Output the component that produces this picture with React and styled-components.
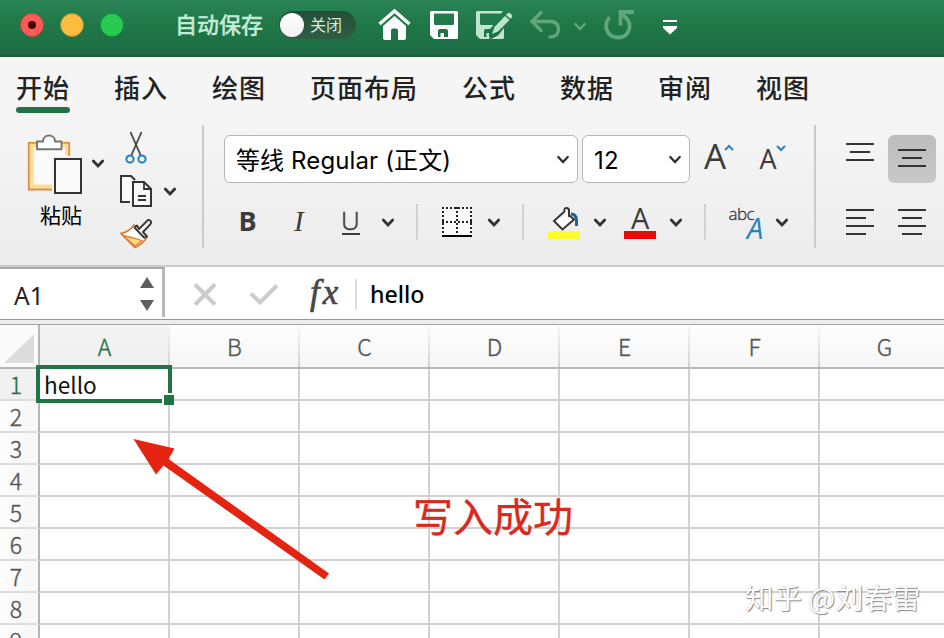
import React from "react";
import styled, { createGlobalStyle } from "styled-components";

const cjk = `"Noto Sans CJK SC", sans-serif`;

const GlobalStyle = createGlobalStyle`
  body {
    margin: 0;
    overflow: hidden;
  }
  * {
    box-sizing: border-box;
  }
  svg {
    display: block;
    flex: none;
    overflow: visible;
  }
`;

const Window = styled.div`
  width: 944px;
  height: 638px;
  position: relative;
  overflow: hidden;
  display: flex;
  flex-direction: column;
  background: #fff;
  font-family: "Open Sans", ${cjk};
  color: #222;
`;

/* title bar */

const TitleBar = styled.div`
  height: 57px;
  flex: none;
  display: flex;
  padding: 0 0 5px 20px;
  align-items: center;
  background: linear-gradient(#2a8455, #1f7647 50%, #1d6e43);
  border-bottom: 2px solid #205c3d;
`;

const Lights = styled.div`
  display: flex;
  gap: 16px;
  width: 155px;
`;

const Light = styled.div`
  width: 24px;
  height: 24px;
  border-radius: 50%;
  background: ${(p) => p.$color};
  border: 1px solid ${(p) => p.$edge};
  display: flex;
  align-items: center;
  justify-content: center;

  i {
    width: 8px;
    height: 8px;
    border-radius: 50%;
    background: #4d0000;
  }
`;

const AutoSave = styled.div`
  width: 104px;
  padding-bottom: 4px;
  font: 500 22px/30px ${cjk};
  -webkit-text-stroke: 0.3px #c4ead5;
  color: #c4ead5;
`;

const Toggle = styled.div`
  width: 77px;
  height: 28px;
  border-radius: 14px;
  padding: 0 0 1px 1px;
  margin-right: 22px;
  display: flex;
  align-items: center;
  gap: 6px;
  background: linear-gradient(#234e37, #2f5e46);
  color: #d5eadd;
  font: 400 16px/22px ${cjk};

  i {
    width: 24px;
    height: 24px;
    border-radius: 50%;
    background: linear-gradient(#fff, #f1f1f1);
  }

  span {
    padding-bottom: 2px;
  }
`;

const QuickIcon = styled.div`
  width: ${(p) => p.$width}px;
  padding-top: ${(p) => p.$drop || 0}px;
  display: flex;
  align-items: center;
`;

/* ribbon */

const Tabs = styled.div`
  height: 68px;
  flex: none;
  display: flex;
  gap: 44px;
  padding: 10px 16px 0;
  background: #f5f5f5;
`;

const Tab = styled.div`
  height: 46px;
  font: 500 26px/40px ${cjk};
  letter-spacing: 1px;
  white-space: nowrap;
  color: #222;
  display: flex;
  flex-direction: column;

  &::after {
    content: "";
    height: 6px;
    flex: none;
    border-radius: 3px;
    background: ${(p) => (p.$active ? "#217346" : "transparent")};
  }
`;

const Ribbon = styled.div`
  height: 140px;
  flex: none;
  display: flex;
  align-items: flex-start;
  padding-left: 27px;
  background: linear-gradient(#f5f5f5, #ececec);
`;

const Paste = styled.div`
  width: 65px;
  padding-top: 8px;

  span {
    display: block;
    margin: 4px 0 0 13px;
    font: 400 21px/30px ${cjk};
    color: #000;
  }
`;

const Split = styled.div`
  padding-top: ${(p) => p.$top}px;
  width: ${(p) => p.$width}px;
`;

const ClipTools = styled.div`
  width: 45px;
  padding-top: 6px;
  display: flex;
  flex-direction: column;
  gap: 10px;
`;

const GroupLine = styled.div`
  width: 2px;
  height: 123px;
  background: #cbcbcb;
`;

const FontGroup = styled.div`
  width: 610px;
  padding: 10px 0 0 20px;
`;

const FontRow = styled.div`
  display: flex;
  height: 48px;
`;

const Select = styled.div`
  width: ${(p) => p.$width}px;
  height: 48px;
  margin-right: ${(p) => p.$after}px;
  display: flex;
  align-items: center;
  justify-content: space-between;
  padding: 0 8px 0 11px;
  background: #fff;
  border: 1px solid #b6b6b6;
  border-radius: 6px;
  font: 400 24px/34px Inter, ${cjk};
  letter-spacing: 0.12px;
  color: #000;
  white-space: nowrap;

  span {
    padding-top: 3px;
  }
`;

const FormatRow = styled.div`
  display: flex;
  align-items: center;
  height: 38px;
  margin-top: 20px;
`;

const Slot = styled.div`
  width: ${(p) => p.$width}px;
  display: flex;
  align-items: center;
  flex: none;
`;

const ThinLine = styled.div`
  width: 2px;
  height: 36px;
  background: #d2d2d2;
`;

const AlignGroup = styled.div`
  display: grid;
  grid-template-columns: 48px 48px;
  grid-template-rows: 48px 48px;
  gap: 15px 4px;
  padding: 10px 0 0 20px;
`;

const AlignButton = styled.div`
  display: flex;
  flex-direction: column;
  align-items: ${(p) => (p.$left ? "flex-start" : "center")};
  gap: 6px;
  padding: ${(p) => p.$top}px 10px 0;
  border-radius: 6px;
  background: ${(p) => (p.$active ? "linear-gradient(#bdbdbd, #c8c8c8)" : "none")};
`;

const Bar = styled.div`
  width: ${(p) => (p.$short ? 20 : 28)}px;
  height: 2px;
  background: #333;
`;

/* formula bar */

const FormulaBar = styled.div`
  height: 60px;
  flex: none;
  display: flex;
  background: #fff;
  border-top: 2px solid #cbcbcb;
  border-bottom: 2px solid #a3a3a3;
`;

const FormulaInner = styled.div`
  flex: 1;
  display: flex;
  align-items: center;
  height: 57px;
  padding-top: 2px;
  border-bottom: 4px solid #ededed;
  box-shadow: inset 0 -1px #989898;
`;

const NameBox = styled.div`
  width: 165px;
  height: 50px;
  margin-top: -2px;
  align-self: flex-start;
  display: flex;
  align-items: center;
  justify-content: space-between;
  padding: 4px 8px 0 14px;
  border-top: 2px solid #aaa;
  border-right: 3px solid #b8b8b8;
  font: 400 24.5px/34px "Noto Sans", sans-serif;

  span {
    padding-top: 2px;
  }
`;

const Fx = styled.div`
  width: 45px;
  padding-bottom: 4px;
  font: italic 400 35px/40px "Liberation Serif", serif;
  letter-spacing: 3px;
  color: #484848;
  -webkit-text-stroke: 0.7px #484848;
`;

const FormulaText = styled.div`
  border-left: 2px solid #dedede;
  height: 31px;
  padding-left: 13px;
  font: 500 23.2px/31px "Noto Sans", sans-serif;
  color: #000;
`;

/* sheet */

const Sheet = styled.div`
  display: grid;
  grid-template-columns: 40px repeat(7, 130px);
  grid-template-rows: 44px repeat(9, 32px);
  flex: none;
`;

const Corner = styled.div`
  border-right: 2px solid #b5b5b5;
  border-bottom: 2px solid #b5b5b5;
  background: #fafafa;
  padding: 9px 0 0 4px;
`;

const ColHead = styled.div`
  display: flex;
  justify-content: center;
  padding: 4px 1px 0 0;
  border-bottom: 2px solid #b8b8b8;
  background: linear-gradient(#f8f8f8, #d2d2d2) right / 2px 100% no-repeat,
    ${(p) => (p.$active ? "linear-gradient(#f3f3f3, #f0f0f0)" : "linear-gradient(#fefefe, #f6f6f6)")};
  font: 300 23px/35px ${cjk};
  -webkit-text-stroke: 0.4px;
  color: ${(p) => (p.$active ? "#217346" : "#555")};
`;

const RowHead = styled.div`
  padding: 0 14px 0 8px;
  text-align: center;
  border-right: 2px solid #b5b5b5;
  border-bottom: 2px solid #ddd;
  background: ${(p) => (p.$active ? "#f1f1f1" : "linear-gradient(90deg, #fdfdfd, #f7f7f7)")};
  font: 300 23px/31px ${cjk};
  -webkit-text-stroke: 0.4px;
  color: ${(p) => (p.$active ? "#217346" : "#555")};
`;

const Cell = styled.div`
  border-right: 2px solid #d0d0d0;
  border-bottom: 2px solid #d0d0d0;
  padding-left: 4px;
  font: 400 22.6px/32px ${cjk};
  color: #111;
`;

/* things lying over the sheet */

const Selection = styled.div`
  position: absolute;
  left: 36px;
  top: 365px;
  width: 136px;
  height: 38px;
  border: 4px solid #217346;

  &::after {
    content: "";
    position: absolute;
    right: -6px;
    bottom: -6px;
    width: 12px;
    height: 12px;
    box-sizing: border-box;
    background: #217346;
    border: solid #fff;
    border-width: 2px 0 0 2px;
  }
`;

const Arrow = styled.svg`
  position: absolute;
  left: 130px;
  top: 435px;
`;

const Note = styled.div`
  position: absolute;
  left: 413px;
  top: 487px;
  font: 400 40px/56px ${cjk};
  -webkit-text-stroke: 0.4px;
  color: #d9291c;
`;

const Watermark = styled.div`
  position: absolute;
  left: 745px;
  top: 577px;
  font: 400 28.4px/40px ${cjk};
  color: #fff;
  text-shadow: 1px 1px 1px #888, 0 0 1px #aaa;
  white-space: nowrap;
`;

const Chevron = ({ color = "#333", width = 2.8 }) => (
  <svg width="12" height="9" viewBox="0 0 12 9" fill="none" stroke={color} strokeWidth={width}>
    <path d="M1.300 2 6 7 10.700 2" strokeLinecap="round" />
  </svg>
);

const HomeIcon = () => (
  <svg width="33" height="32" viewBox="0 0 33 32" fill="#fff">
    <path d="M1.500 15 16.500 2 31.500 15" fill="none" stroke="#fff" strokeWidth="3.400" />
    <path d="M5 17 16.500 7 28 17V29Q28 31 26 31H20V21.500Q20 19.500 18 19.500H15Q13 19.500 13 21.500V31H7Q5 31 5 29Z" />
  </svg>
);

const SaveIcon = () => (
  <svg width="28" height="28" viewBox="0 0 28 28" fill="#fff">
    <path
      fillRule="evenodd"
      d="M1.500 0H26.500Q28 0 28 1.500V26.500Q28 28 26.500 28H4L0 24V1.500Q0 0 1.500 0ZM4 2.500V12.500Q4 14 5.500 14H22.500Q24 14 24 12.500V2.500ZM8 26V20Q8 18 10 18H16Q18 18 18 20V26Z"
    />
    <path d="M10.500 22H14V27H10.500Z" />
  </svg>
);

const SaveAsIcon = () => (
  <svg width="37" height="28" viewBox="0 0 37 28" fill="#c0e4d0">
    <path
      fillRule="evenodd"
      d="M1.500 0H27L25 2.500H4V12.500Q4 14 5.500 14H17.500L14 18H10Q8 18 8 20V26H14L13 28H4L0 24V1.500Q0 0 1.500 0ZM28 17V26.500Q28 28 26.500 28H15L22 24.500Z"
    />
    <path d="M10.500 22H13V27H10.500Z" />
    <path d="M16 23 18.500 16 29 5 33.500 9 22 20.500Z" />
    <path d="m30 4 2-2Q33 1 35 3T36 6L34.500 8Z" />
  </svg>
);

const UndoIcon = () => (
  <svg width="31" height="28" viewBox="530 11 31 28" fill="none" stroke="#62a680" strokeWidth="3.400" strokeLinecap="round">
    <path d="M541 12.500 532 21.500 541 30.500M533 21.500H551Q558.500 22 558.500 29.500Q558 37 550 37" />
  </svg>
);

const RedoIcon = () => (
  <svg width="31" height="31" viewBox="604 11 31 31" fill="none" stroke="#62a680" strokeWidth="3.800">
    <path d="M608.500 19.500C604 26 606 38.500 618 38.500C630 38.500 632.500 25 626 19L621 14" strokeLinecap="round" />
    <path d="M620.500 26.500V13H634" />
  </svg>
);

const PasteIcon = () => (
  <svg width="56" height="62" viewBox="27 134 56 62">
    <path d="M29.500 144.500H69V190H29.500Z" fill="#fbfbfb" />
    <path d="M31.700 189V146.500H67V156" fill="none" stroke="#ffdc94" strokeWidth="4" />
    <path d="M30 187.500H52" stroke="#ffdc94" strokeWidth="4" />
    <path d="M69.200 157V143.800H28.800V190.500H52" fill="none" stroke="#e28d3d" strokeWidth="1.800" />
    <path d="M52 157H71V191.500H52Z" fill="#f2f2f2" />
    <path d="M37 150.200V142.500H43C43 134.500 55 134.500 55 142.500H61.500V150.200Z" fill="#fff" stroke="#757575" strokeWidth="1.900" />
    <path d="M55 160H81V194H55Z" fill="#fafafa" stroke="#353535" strokeWidth="2" />
  </svg>
);

const CutIcon = () => (
  <svg width="34" height="34" viewBox="119 131 34 34" fill="none">
    <path d="M130.500 132 140.500 155M141.500 132 131.500 155" stroke="#444" strokeWidth="1.800" />
    <circle cx="130" cy="159" r="3.600" stroke="#1b83bb" strokeWidth="2" />
    <circle cx="142" cy="159" r="3.600" stroke="#1b83bb" strokeWidth="2" />
  </svg>
);

const CopyIcon = () => (
  <svg width="34" height="34" viewBox="119 175 34 34" fill="#fafafa" stroke="#353535" strokeWidth="2">
    <path d="M130 202H121V176H131L135 180" />
    <path d="M133 182H144L151 189V206H133Z" />
    <path d="M144 182V189H151M138 196H146M138 200H146" fill="none" strokeWidth="1.800" />
  </svg>
);

const BrushIcon = () => (
  <svg width="34" height="32" viewBox="119 219 34 32" strokeLinejoin="round">
    <path d="M134 225 147 237Q143 244 135 247.500L121 233.500Q129 232 134 225Z" fill="#fff" stroke="#df7f34" strokeWidth="1.800" />
    <path d="M123 235.500Q134 238 142 240.500L135 246Z" fill="#ffda80" stroke="#df7f34" strokeWidth="1.300" />
    <path d="m139 229 7.500-7.500Q148 219 150 220.500T150.500 224L143 232 147 236.500 144 237.500 134.500 227.500 137 225.500Z" fill="#fff" stroke="#383838" strokeWidth="1.900" />
  </svg>
);

const GrowFont = () => (
  <svg width="55" height="48" viewBox="704 135 55 48">
    <text x="704" y="168.500" fontSize="35" fill="#3b3b3b">A</text>
    <path d="m725 150 4-4 4 4" fill="none" stroke="#2585bd" strokeWidth="2" />
  </svg>
);

const ShrinkFont = () => (
  <svg width="30" height="48" viewBox="759 135 30 48">
    <text x="759.500" y="168.500" fontSize="27" fill="#3b3b3b">A</text>
    <path d="m777 146 4 4 4-4" fill="none" stroke="#2585bd" strokeWidth="2" />
  </svg>
);

const BoldIcon = () => (
  <svg width="20" height="38" viewBox="239 203 20 38">
    <text x="238.500" y="231" fontSize="27" fontWeight="700" fill="#3b3b3b">B</text>
  </svg>
);

const ItalicIcon = () => (
  <svg width="20" height="38" viewBox="290 203 20 38">
    <text x="294" y="231" fontSize="29" fontStyle="italic" fontFamily="Liberation Serif" fill="#3b3b3b">I</text>
  </svg>
);

const UnderlineIcon = () => (
  <svg width="20" height="38" viewBox="341 203 20 38">
    <text x="341" y="229.500" fontSize="26" fontWeight="300" fill="#3b3b3b" stroke="#3b3b3b" strokeWidth=".5">U</text>
    <path d="M342 234H360" stroke="#3b3b3b" strokeWidth="2" />
  </svg>
);

const BorderIcon = () => (
  <svg width="30" height="38" viewBox="442 203 30 38">
    <path d="M442 207H472V235H442Z" fill="#fafafa" />
    <path
      d="M442 208H472M442 222H472M443 207V234M457 207V234M471 207V234"
      stroke="#222"
      strokeWidth="2"
      strokeDasharray="2 2"
    />
    <path d="M442 236H472" stroke="#000" strokeWidth="2" />
  </svg>
);

const FillIcon = () => (
  <svg width="34" height="38" viewBox="547 203 34 38">
    <path d="M548 231H580V239H548Z" fill="#fdfd2e" />
    <path d="M565 211 554 221 562.500 229.500 574 219.500 569 215V211Q569 208 566.500 208T564.500 211" fill="#fff" stroke="#353535" strokeWidth="2" />
    <path d="M569 209V217" stroke="#353535" strokeWidth="1.800" />
    <path d="M571 214Q576 214 576.500 220V226" fill="none" stroke="#1d639d" strokeWidth="3" />
  </svg>
);

const FontColorIcon = () => (
  <svg width="32" height="38" viewBox="624 203 32 38">
    <text x="631" y="228.500" fontSize="29" fill="#3b3b3b">A</text>
    <path d="M624 231H656V239H624Z" fill="#e80b05" />
  </svg>
);

const PhoneticIcon = () => (
  <svg width="38" height="38" viewBox="729 203 38 38">
    <text x="728.500" y="219.500" fontSize="17" fontWeight="300" fill="#333" stroke="#333" strokeWidth=".3" textLength="26">abc</text>
    <text x="747" y="238.500" fontSize="29" fontStyle="italic" fill="#2585bd">A</text>
  </svg>
);

const tabs = ["开始", "插入", "绘图", "页面布局", "公式", "数据", "审阅", "视图"];
const columns = ["A", "B", "C", "D", "E", "F", "G"];
const rows = [1, 2, 3, 4, 5, 6, 7, 8, 9];

function Title() {
  return (
    <TitleBar>
      <Lights>
        <Light $color="#fc5b57" $edge="#b04a3d"><i /></Light>
        <Light $color="#fdbc40" $edge="#97903a" />
        <Light $color="#27cb4f" $edge="#17913d" />
      </Lights>
      <AutoSave>自动保存</AutoSave>
      <Toggle><i /><span>关闭</span></Toggle>
      <QuickIcon $width={52}><HomeIcon /></QuickIcon>
      <QuickIcon $width={46}><SaveIcon /></QuickIcon>
      <QuickIcon $width={54}><SaveAsIcon /></QuickIcon>
      <QuickIcon $width={44}><UndoIcon /></QuickIcon>
      <QuickIcon $width={30} $drop={2}><Chevron color="#62a680" width={2.4} /></QuickIcon>
      <QuickIcon $width={58} $drop={1}><RedoIcon /></QuickIcon>
      <QuickIcon $width={16} $drop={4}>
        <svg width="16" height="15" viewBox="0 0 16 15" fill="#fff">
          <path d="M1 0H15V2H1ZM1 6H15V8L8 14.500 1 8Z" />
        </svg>
      </QuickIcon>
    </TitleBar>
  );
}

function FontTools() {
  return (
    <FontGroup>
      <FontRow>
        <Select $width={354} $after={4}><span>等线 Regular (正文)</span><Chevron width={2.4} /></Select>
        <Select $width={108} $after={14}><span>12</span><Chevron width={2.4} /></Select>
        <GrowFont />
        <ShrinkFont />
      </FontRow>
      <FormatRow>
        <Slot $width={15} />
        <Slot $width={51}><BoldIcon /></Slot>
        <Slot $width={51}><ItalicIcon /></Slot>
        <Slot $width={41}><UnderlineIcon /></Slot>
        <Slot $width={34}><Chevron /></Slot>
        <Slot $width={26}><ThinLine /></Slot>
        <Slot $width={46}><BorderIcon /></Slot>
        <Slot $width={34}><Chevron /></Slot>
        <Slot $width={25}><ThinLine /></Slot>
        <Slot $width={47}><FillIcon /></Slot>
        <Slot $width={30}><Chevron /></Slot>
        <Slot $width={46}><FontColorIcon /></Slot>
        <Slot $width={34}><Chevron /></Slot>
        <Slot $width={25}><ThinLine /></Slot>
        <Slot $width={47}><PhoneticIcon /></Slot>
        <Slot $width={12}><Chevron /></Slot>
      </FormatRow>
    </FontGroup>
  );
}

function AlignTools() {
  return (
    <AlignGroup>
      <AlignButton $top={8}><Bar /><Bar $short /><Bar /></AlignButton>
      <AlignButton $top={14} $active><Bar /><Bar $short /><Bar /></AlignButton>
      <AlignButton $top={11} $left><Bar /><Bar $short /><Bar /><Bar $short /></AlignButton>
      <AlignButton $top={11}><Bar /><Bar $short /><Bar /><Bar $short /></AlignButton>
    </AlignGroup>
  );
}

function App() {
  return (
    <Window>
      <GlobalStyle />
      <Title />
      <Tabs>
        {tabs.map((tab, i) => (
          <Tab key={tab} $active={i === 0}>{tab}</Tab>
        ))}
      </Tabs>
      <Ribbon>
        <Paste>
          <PasteIcon />
          <span>粘贴</span>
        </Paste>
        <Split $top={34} $width={27}><Chevron /></Split>
        <ClipTools>
          <CutIcon />
          <CopyIcon />
          <BrushIcon />
        </ClipTools>
        <Split $top={62} $width={38}><Chevron /></Split>
        <GroupLine />
        <FontTools />
        <GroupLine />
        <AlignTools />
      </Ribbon>
      <FormulaBar>
        <FormulaInner>
          <NameBox>
            <span>A1</span>
            <svg width="14" height="34" viewBox="0 1 14 34" fill="#5f5f5f">
              <path d="M7 0 14 11H0ZM7 34 0 23H14Z" />
            </svg>
          </NameBox>
          <Slot $width={28} />
          <Slot $width={56}>
            <svg width="24" height="24" viewBox="0 0.500 24 24" stroke="#cbcbcb" strokeWidth="4">
              <path d="M2 2 22 22M22 2 2 22" />
            </svg>
          </Slot>
          <Slot $width={61}>
            <svg width="30" height="24" viewBox="0 0.500 30 24" fill="none" stroke="#cbcbcb" strokeWidth="4">
              <path d="M2 11 11 20 28 3" />
            </svg>
          </Slot>
          <Fx>fx</Fx>
          <FormulaText>hello</FormulaText>
        </FormulaInner>
      </FormulaBar>
      <Sheet>
        <Corner>
          <svg width="30" height="29" viewBox="0 0 30 29">
            <path d="M30 0V29H0Z" fill="#dcdcdc" />
          </svg>
        </Corner>
        {columns.map((c) => (
          <ColHead key={c} $active={c === "A"}>{c}</ColHead>
        ))}
        {rows.map((r) => (
          <React.Fragment key={r}>
            <RowHead $active={r === 1}>{r}</RowHead>
            {columns.map((c) => (
              <Cell key={c}>{r === 1 && c === "A" ? "hello" : ""}</Cell>
            ))}
          </React.Fragment>
        ))}
      </Sheet>
      <Selection />
      <Arrow width="200" height="150" viewBox="130 435 200 150" fill="#e42313">
        <path d="M133.500 439 174.500 448.500 168.500 459 329 573.500 324.500 579.500 163.500 465.500 156 474.500Z" />
      </Arrow>
      <Note>写入成功</Note>
      <Watermark>知乎 @刘春雷</Watermark>
    </Window>
  );
}

export default App;
